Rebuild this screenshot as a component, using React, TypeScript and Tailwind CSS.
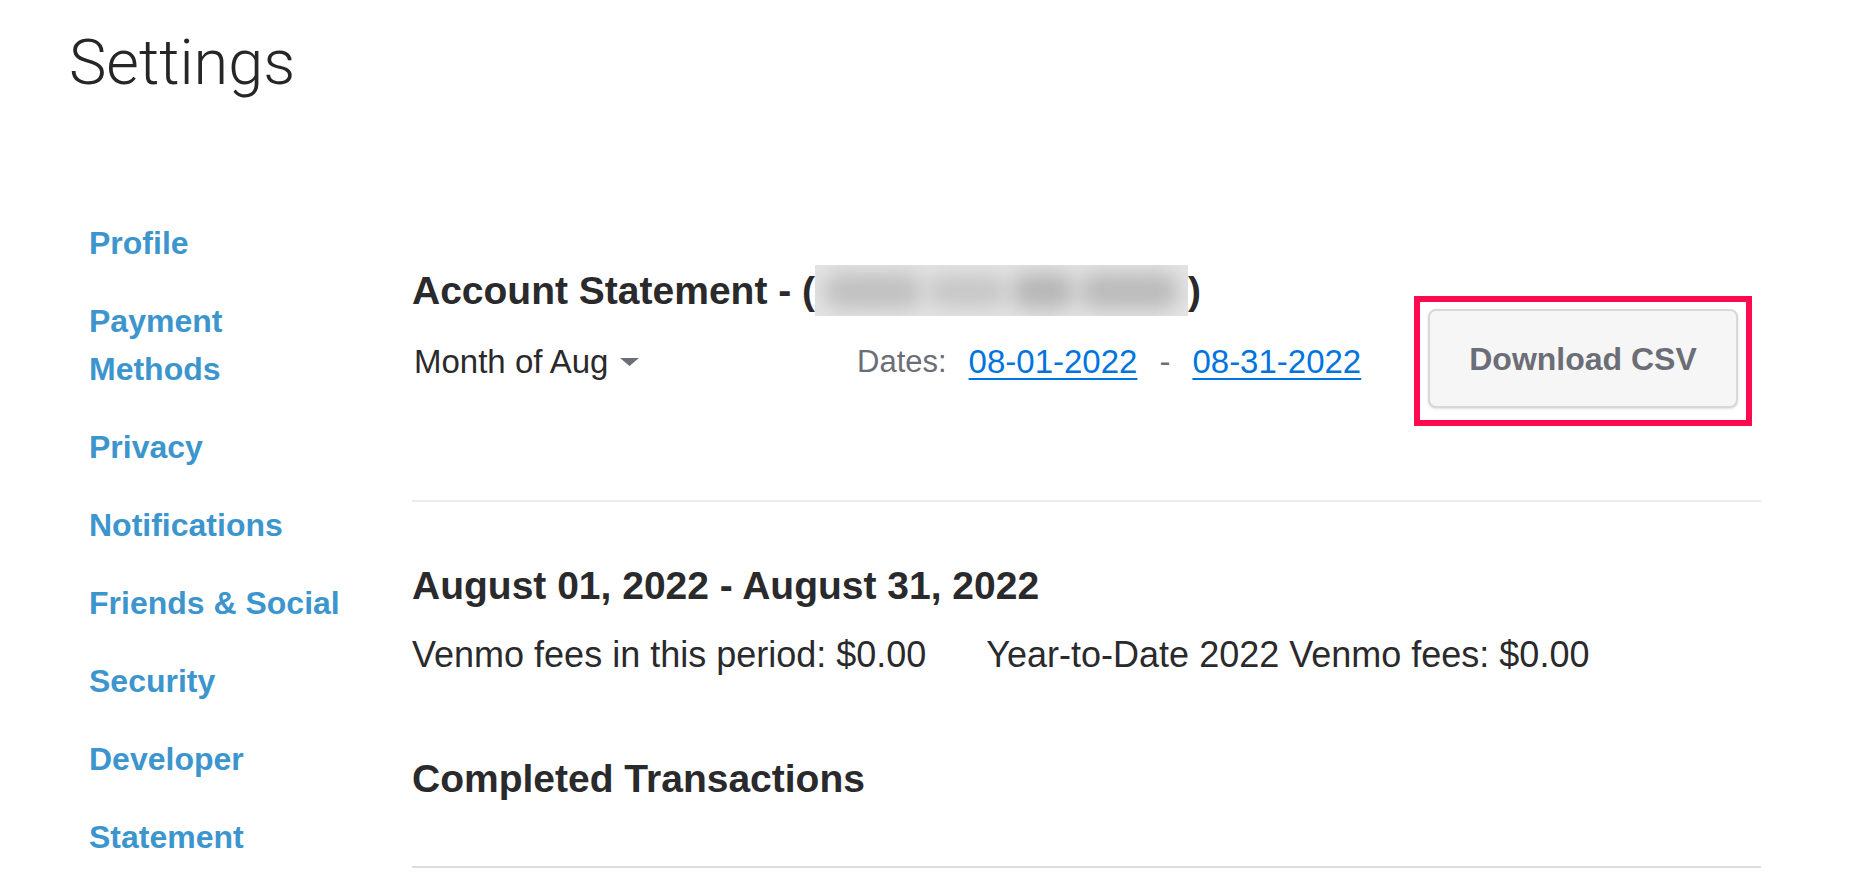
import React from 'react';

const navItems = ['Profile', 'Payment Methods', 'Privacy', 'Notifications', 'Friends & Social', 'Security', 'Developer', 'Statement'];

// redacted account name in the title
const BlurredName = () => (
  <div className="w-[373px] h-[51px] bg-[#e4e4e4] overflow-hidden flex items-center gap-[4px] px-[8px]">
    <span className="w-[100px] h-[36px] rounded-full bg-[#c0c0c0] blur-[10px]" />
    <span className="w-[80px] h-[32px] rounded-full bg-[#c6c6c6] blur-[10px]" />
    <span className="w-[64px] h-[36px] rounded-full bg-[#b6b6b6] blur-[10px]" />
    <span className="w-[100px] h-[36px] rounded-full bg-[#bababa] blur-[10px]" />
  </div>
);

export default function App() {
  return (
    <div className="w-full h-[884px] bg-white overflow-hidden font-['Liberation_Sans',Arial,sans-serif] text-[#2a2a2d]">
      {/* Page title */}
      <h1 className="ml-[69px] pt-[31px] font-['Roboto',sans-serif] font-light text-[63px] leading-[64px] text-[#262626]">
        Settings
      </h1>

      <div className="flex items-start mt-[122px]">
        {/* Sidebar */}
        <nav className="w-[412px] shrink-0 pl-[89px] pt-[2px]">
          <ul className="w-[262px] flex flex-col gap-[30px]">
            {navItems.map(item => (
              <li key={item} className="text-[32px] leading-[48px] font-bold text-[#3d95ce]">
                {item}
              </li>
            ))}
          </ul>
        </nav>

        {/* Main */}
        <main className="flex-1 mt-[48px] pr-[95px]">
          <div className="flex items-start">
            <div>
              <div className="flex items-center h-[51px] text-[39px] leading-[51px] font-bold">
                <span className="whitespace-pre">Account Statement - (</span>
                <BlurredName />
                <span>)</span>
              </div>
              <div className="flex items-center mt-[26px] pl-[2px] text-[33px] leading-[40px]">
                <div className="w-[443px] flex items-center">
                  <span>Month of Aug</span>
                  <svg className="ml-[12px]" width="19" height="8" viewBox="0 0 19 8">
                    <path d="M0 0 L19 0 L9.5 8 Z" fill="#6b6e76" />
                  </svg>
                </div>
                <span className="text-[31px] text-[#6b6e76]">Dates:</span>
                <a className="ml-[22px] text-[#0074de] underline underline-offset-[5px] decoration-2">08-01-2022</a>
                <span className="mx-[22px] text-[#6b6e76]">-</span>
                <a className="text-[#0074de] underline underline-offset-[5px] decoration-2">08-31-2022</a>
              </div>
            </div>

            <div className="ml-auto mr-[9px] mt-[31px] border-[6px] border-[#ff0a50] pt-[7px] px-[8px] pb-[12px]">
              <button className="w-[310px] h-[99px] rounded-[8px] border-2 border-[#d8d8d8] bg-[#f6f6f6] shadow-sm text-[32px] font-bold text-[#6b6e76]">
                Download CSV
              </button>
            </div>
          </div>

          <div className="mt-[74px] h-[2px] bg-[#ececec]" />

          <h2 className="mt-[62px] text-[39px] leading-[44px] font-bold">August 01, 2022 - August 31, 2022</h2>
          <div className="mt-[25px] flex gap-[60px] text-[36px] leading-[44px]">
            <span>Venmo fees in this period: $0.00</span>
            <span>Year-to-Date 2022 Venmo fees: $0.00</span>
          </div>

          <h2 className="mt-[80px] text-[39px] leading-[44px] font-bold">Completed Transactions</h2>
          <div className="mt-[65px] h-[2px] bg-[#dcdcdc]" />
        </main>
      </div>
    </div>
  );
}
